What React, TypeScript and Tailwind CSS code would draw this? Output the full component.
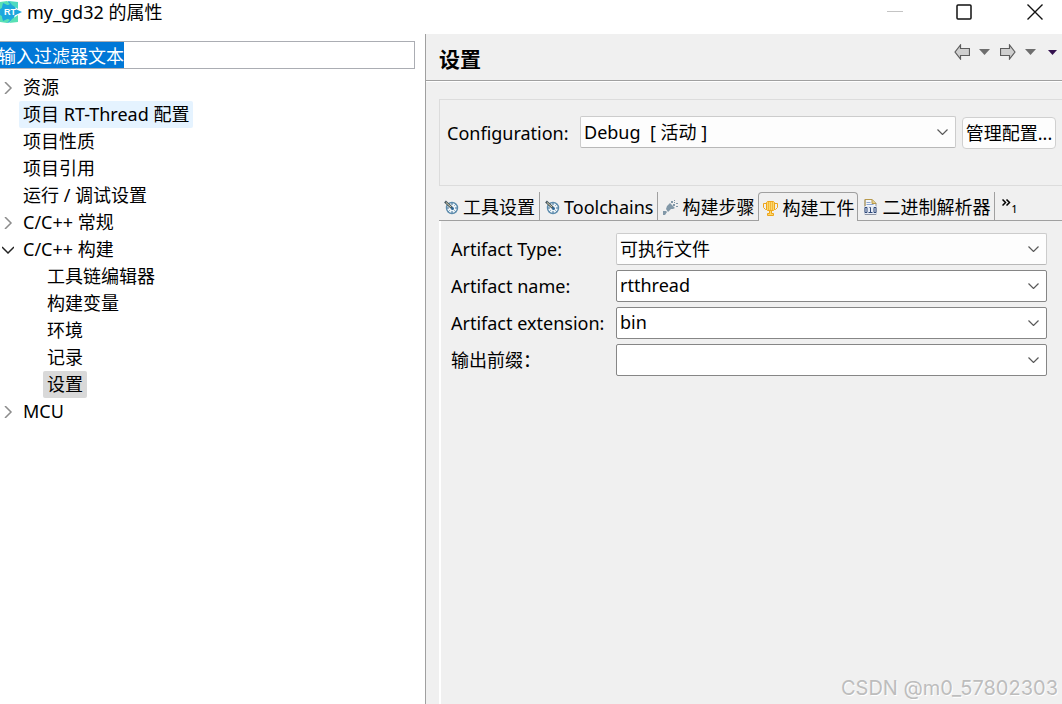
import { useEffect, useRef, useState } from 'react';
import type { ReactNode } from 'react';

type TreeNode = { label: string; expandable?: boolean; children?: string[] };

const tree: TreeNode[] = [
  { label: '资源', expandable: true },
  { label: '项目 RT-Thread 配置' },
  { label: '项目性质' },
  { label: '项目引用' },
  { label: '运行 / 调试设置' },
  { label: 'C/C++ 常规', expandable: true },
  {
    label: 'C/C++ 构建',
    expandable: true,
    children: ['工具链编辑器', '构建变量', '环境', '记录', '设置'],
  },
  { label: 'MCU', expandable: true },
];

const HIGHLIGHTED = '项目 RT-Thread 配置';

function LogoIcon() {
  return (
    <svg className="h-[22px] w-[22px] shrink-0" viewBox="0 0 22 22">
      <path d="M0 4L9 0 16 4 14 18 8 22 0 18Z" fill="#1fa9dc" />
      <path d="M0 1L7 0 10 3 0 8Z" fill="#58e0b4" />
      <path d="M0 14L10 19 7 22 0 21Z" fill="#58e0b4" />
      <path d="M9 0L18 1 18 8 12 4Z" fill="#4fd9c0" />
      <path d="M9 22L18 21 18 14 12 18Z" fill="#58e0b4" />
      <path d="M3 2L22 11 3 20Q0 11 3 2Z" fill="#1ca6dd" />
      <text x="4" y="14" fontSize="9" fontWeight="700" fill="#fff" fontFamily="Liberation Sans, sans-serif">RT</text>
    </svg>
  );
}

function CompassIcon() {
  return (
    <svg className="h-[15px] w-[15px] shrink-0" viewBox="0 0 15 15" fill="none">
      <circle cx="8" cy="8" r="5.500" fill="#eef5f9" stroke="#5b8bac" strokeWidth="1.400" />
      <path d="M8 3v2M8 11v2M11 8h2M3 8h2M11.500 4.500l-1 1M11.500 11.500l-1-1M4.500 11.500l1-1" stroke="#3f7198" />
      <path d="M1 1.500l7 6.500" stroke="#4a5a63" strokeWidth="2.600" />
      <path d="M2 2.500l5 4.500" stroke="#d9d0a6" />
      <circle cx="8.500" cy="8.500" r="1.500" fill="#2c6494" />
    </svg>
  );
}

function StepsIcon() {
  return (
    <svg className="h-[15px] w-[15px] shrink-0" viewBox="0 0 15 15" fill="#8298a8">
      <path d="M4 6L7 3 12 8 10 9 8 9 5 12 3 9z" />
      <path d="M0 11h3l1 1-2 3H0z" />
      <path d="M8 1h2v2H8zM11 2h1v1h-1zM10 4h2v2h-2zM13 3h2v1h-2zM11 0h1v1h-1zM13 6h2v1h-2z" />
    </svg>
  );
}

function TrophyIcon() {
  return (
    <svg className="h-[15px] w-[15px] shrink-0" viewBox="0 0 15 15" fill="none" stroke="#eda51c">
      <path d="M3.500 2.500h-3v4l2 2h2M11.500 2.500h3v4l-2 2h-2" />
      <path d="M3.500 1.500l1-1h6l1 1v7l-1 1h-6l-1-1z" fill="#fbd86b" />
      <path d="M5.500 1v8M7.500 1v8M9.500 1v8" stroke="#f3b63a" />
      <path d="M6.500 9.500h2v3h2v2h-6v-2h2z" fill="#fbd86b" />
    </svg>
  );
}

function BinaryIcon() {
  return (
    <svg className="h-[16px] w-[15px] shrink-0" viewBox="0 0 14 16" fill="none">
      <path d="M1.500 .500h7l4 4v11h-11z" fill="#f4f6fa" stroke="#8c93a2" />
      <path d="M1.500 8V.500h7l4 4" stroke="#b99a4b" />
      <path d="M8.500 .500v4h4" fill="#e5cf8d" stroke="#b99a4b" />
      <path d="M3 3.500h4M3 5.500h7" stroke="#8ca6cf" />
      <path d="M1 7h12v8H1z" fill="#e6ebf5" />
      <path d="M1.500 8.500h2v5h-2zM6 8.500h1v5M5 13.500h4M10.500 8.500h2v5h-2z" stroke="#2f4979" />
    </svg>
  );
}

function DropChevron() {
  return (
    <svg className="h-[6px] w-[11px]" viewBox="0 0 11 6" fill="none" stroke="#5a5a5a" strokeWidth="1.200">
      <path d="M.500 .500l5 5 5-5" />
    </svg>
  );
}

function HistoryArrow({ flip }: { flip?: boolean }) {
  return (
    <svg className="h-4 w-4" viewBox="0 0 16 16" fill="#cfcfcf" stroke="#5c5c5c" strokeWidth="1.200">
      <path d={flip ? 'M15 8L9.500 1V4.500H.500V11.500H9.500V15Z' : 'M1 8L6.500 1V4.500H15.500V11.500H6.500V15Z'} />
    </svg>
  );
}

function Triangle({ color, small }: { color: string; small?: boolean }) {
  return (
    <svg className={small ? 'h-[5px] w-[9px]' : 'h-[6px] w-[11px]'} viewBox="0 0 10 5" preserveAspectRatio="none">
      <path d="M0 0h10L5 5z" fill={color} />
    </svg>
  );
}

function TreeLabel({ label, selected, onSelect }: { label: string; selected: boolean; onSelect: () => void }) {
  let bg = '';
  if (label === HIGHLIGHTED) bg = 'bg-[#e5f3ff]';
  if (selected) bg = 'bg-[#d9d9d9]';
  return (
    <button type="button" onClick={onSelect} className={`h-[27px] whitespace-nowrap rounded-xs px-1 ${bg}`}>
      {label}
    </button>
  );
}

function Combo({ id, value }: { id: string; value: string }) {
  return (
    <div className="flex h-8 items-center rounded-xs border border-[#868686] bg-white pr-[7px]">
      <input id={id} defaultValue={value} className="h-full min-w-0 flex-1 bg-transparent pl-[3px] pb-[2px] outline-none" />
      <button type="button" aria-label="展开">
        <DropChevron />
      </button>
    </div>
  );
}

function Dropdown({ id, options }: { id: string; options: string[] }) {
  return (
    <div className="relative h-8">
      <select
        id={id}
        className="h-full w-full appearance-none rounded-xs border border-[#cccccc] border-b-[#b8b8b8] bg-[#fdfdfd] pl-[3px] pr-6 whitespace-pre outline-none"
      >
        {options.map((o) => (
          <option key={o}>{o}</option>
        ))}
      </select>
      <div className="pointer-events-none absolute inset-y-0 right-2 flex items-center">
        <DropChevron />
      </div>
    </div>
  );
}

const tabs: { label: string; icon: ReactNode }[] = [
  { label: '工具设置', icon: <CompassIcon /> },
  { label: 'Toolchains', icon: <CompassIcon /> },
  { label: '构建步骤', icon: <StepsIcon /> },
  { label: '构建工件', icon: <TrophyIcon /> },
  { label: '二进制解析器', icon: <BinaryIcon /> },
];

export default function App() {
  const filterRef = useRef<HTMLInputElement>(null);
  const [selected, setSelected] = useState('设置');
  const [open, setOpen] = useState<Record<string, boolean>>({ 'C/C++ 构建': true });
  const [tab, setTab] = useState('构建工件');

  useEffect(() => {
    filterRef.current?.focus();
    filterRef.current?.select();
  }, []);

  return (
    <div className="relative flex min-h-screen flex-col overflow-hidden bg-white font-['Noto_Sans','Noto_Sans_CJK_SC',sans-serif] text-[18px] leading-[27px] text-black">
      <header className="flex h-[34px] shrink-0 items-start justify-between">
        <div className="flex items-center gap-[5px]">
          <LogoIcon />
          <h1 className="h-6 leading-6">my_gd32 的属性</h1>
        </div>
        <div className="flex h-6 items-center pr-[19px]">
          <button type="button" aria-label="最小化" disabled className="mr-[53px]">
            <svg className="h-4 w-4" viewBox="0 0 16 16" stroke="#c4c4c4">
              <path d="M0 7.500h16" />
            </svg>
          </button>
          <button type="button" aria-label="最大化" className="mr-[55px]">
            <svg className="h-4 w-4" viewBox="0 0 16 16" fill="none" stroke="#111" strokeWidth="1.500">
              <rect x="1" y="1" width="14" height="14" rx="1" />
            </svg>
          </button>
          <button type="button" aria-label="关闭">
            <svg className="h-4 w-4" viewBox="0 0 16 16" stroke="#111" strokeWidth="1.400">
              <path d="M.500 .500l15 15M15.500 .500l-15 15" />
            </svg>
          </button>
        </div>
      </header>

      <div className="flex flex-1">
        <aside className="w-[425px] shrink-0 pt-[7px]">
          <input
            ref={filterRef}
            aria-label="过滤器"
            defaultValue="输入过滤器文本"
            className="block h-7 w-[415px] border border-l-0 border-[#abadb3] -indent-0.5 leading-6 outline-none selection:bg-[#0078d7] selection:text-white"
          />
          <ul className="pt-[5px]">
            {tree.map((node) => (
              <li key={node.label}>
                <div className="flex h-[27px] items-center">
                  <div className="flex w-[19px] shrink-0 pl-[2px]">
                    {node.expandable && (
                      <button
                        type="button"
                        aria-label={node.label}
                        aria-expanded={!!open[node.label]}
                        onClick={() => setOpen({ ...open, [node.label]: !open[node.label] })}
                      >
                        {open[node.label] ? (
                          <svg className="h-3 w-3" viewBox="0 0 12 12" fill="none" stroke="#222" strokeWidth="1.500">
                            <path d="M0 3l6 6 6-6" />
                          </svg>
                        ) : (
                          <svg className="h-3 w-3" viewBox="0 0 12 12" fill="none" stroke="#8c8c8c" strokeWidth="1.500">
                            <path d="M3 0l6 6-6 6" />
                          </svg>
                        )}
                      </button>
                    )}
                  </div>
                  <TreeLabel label={node.label} selected={selected === node.label} onSelect={() => setSelected(node.label)} />
                </div>
                {open[node.label] && node.children && (
                  <ul className="pl-[43px]">
                    {node.children.map((child) => (
                      <li key={child} className="h-[27px]">
                        <TreeLabel label={child} selected={selected === child} onSelect={() => setSelected(child)} />
                      </li>
                    ))}
                  </ul>
                )}
              </li>
            ))}
          </ul>
        </aside>

        <main className="flex min-w-0 flex-1 flex-col border-l border-[#a0a0a0] bg-[#f0f0f0]">
          <div className="flex h-[47px] shrink-0 justify-between border-b border-[#a0a0a0] pl-[13px] pr-[5px]">
            <h2 className="pt-3 text-[21px] font-bold">设置</h2>
            <div className="flex h-9 items-center">
              <button type="button" aria-label="后退" className="mr-[9px]">
                <HistoryArrow />
              </button>
              <button type="button" aria-label="后退历史" className="mr-[10px]">
                <Triangle color="#6e6e6e" />
              </button>
              <button type="button" aria-label="前进" className="mr-[9px]">
                <HistoryArrow flip />
              </button>
              <button type="button" aria-label="前进历史" className="mr-3">
                <Triangle color="#6e6e6e" />
              </button>
              <button type="button" aria-label="菜单">
                <Triangle color="#34124f" small />
              </button>
            </div>
          </div>

          <div className="flex flex-1 flex-col border-t border-white pl-[13px] pt-[17px]">
            <section className="flex h-[87px] shrink-0 items-start border border-r-0 border-[#dcdcdc] pl-[7px] pr-[6px] pt-4">
              <label htmlFor="configuration" className="w-[133px] shrink-0 pt-1">
                Configuration:
              </label>
              <div className="min-w-0 flex-1">
                <Dropdown id="configuration" options={['Debug\u00a0 [ 活动 ]']} />
              </div>
              <button
                type="button"
                className="ml-[6px] mt-px h-8 w-[94px] shrink-0 whitespace-nowrap rounded-sm border border-[#d0d0d0] bg-[#fdfdfd]"
              >
                管理配置...
              </button>
            </section>

            <div role="tablist" className="mt-[6px] flex h-[29px] shrink-0">
              {tabs.map((t, i) => {
                const active = tab === t.label;
                const before = tabs[i + 1]?.label === tab;
                return (
                  <button
                    key={t.label}
                    type="button"
                    role="tab"
                    aria-selected={active}
                    onClick={() => setTab(t.label)}
                    className={`flex items-center whitespace-nowrap pt-[2px] ${
                      active
                        ? 'rounded-t-sm border border-b-0 border-[#a0a0a0] pl-1 pr-[3px]'
                        : before
                          ? 'border-b border-[#a0a0a0] pl-[5px] pr-1'
                          : 'border-r border-b border-[#a0a0a0] pl-[5px] pr-1'
                    }`}
                  >
                    {t.icon}
                    <span className="ml-1">{t.label}</span>
                  </button>
                );
              })}
              <button
                type="button"
                aria-label="更多选项卡"
                className="flex flex-1 items-start border-b border-[#a0a0a0] pl-[7px]"
              >
                <svg className="mt-[7px] h-[7px] w-[9px]" viewBox="0 0 9 7" fill="none" stroke="#000" strokeWidth="1.500">
                  <path d="M.500 .500l3 3-3 3M4.500 .500l3 3-3 3" />
                </svg>
                <span className="mt-[9px] text-[10px] font-medium leading-4">1</span>
              </button>
            </div>

            <div className="flex-1 border-l-2 border-white pl-[10px] pr-[15px] pt-3">
              <div className="grid grid-cols-[165px_minmax(0,1fr)] items-center gap-y-[5px]">
                <label htmlFor="type">Artifact Type:</label>
                <Dropdown id="type" options={['可执行文件', '静态库', '共享库']} />
                <label htmlFor="name">Artifact name:</label>
                <Combo id="name" value="rtthread" />
                <label htmlFor="extension">Artifact extension:</label>
                <Combo id="extension" value="bin" />
                <label htmlFor="prefix">输出前缀：</label>
                <Combo id="prefix" value="" />
              </div>
            </div>
          </div>
        </main>
      </div>

      <div className="pointer-events-none absolute bottom-1 right-1 font-['Inter','Liberation_Sans',sans-serif] text-[20px] leading-6 text-[#bdbdbd] [text-shadow:1px_1px_0_#ffffff]">
        CSDN @m0_57802303
      </div>
    </div>
  );
}
